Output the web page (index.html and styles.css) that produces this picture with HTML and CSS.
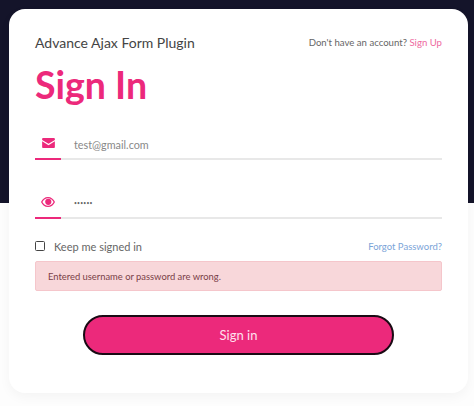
FILE: index.html
```html
<!DOCTYPE html>
<html lang="en">
<head>
  <meta charset="UTF-8" />
  <title>Sign In</title>
  <link rel="stylesheet" href="styles.css">
</head>
<body>
<div class="backdrop"></div>
<div class="page">
  <div class="card">
    <div class="top-row">
      <span class="brand">Advance Ajax Form Plugin</span>
      <span class="account">Don't have an account? <a href="#">Sign Up</a></span>
    </div>
    <h1>Sign In</h1>

    <div class="field">
      <span class="field-icon">
        <svg width="13" height="10" viewBox="0 0 14 11"><path d="M1.2 0h11.600C13.500 0 14 .5 14 1.200v.9L7 6.300 0 2.100v-.9C0 .5.5 0 1.200 0zM0 3.700l7 4.200 7-4.200v6.100c0 .7-.5 1.200-1.200 1.200H1.200C.5 11 0 10.500 0 9.800z" fill="#ec297b"/></svg>
      </span>
      <span class="field-value muted">test@gmail.com</span>
    </div>

    <div class="field second">
      <span class="field-icon">
        <svg width="14" height="10" viewBox="0 0 14 10"><path d="M7 0C3.900 0 1.300 2 0 5c1.300 3 3.900 5 7 5s5.700-2 7-5c-1.300-3-3.900-5-7-5zm0 8.800C4.700 8.800 2.600 7.300 1.400 5 2.600 2.700 4.700 1.200 7 1.200s4.400 1.500 5.600 3.800C11.400 7.300 9.300 8.800 7 8.800z" fill="#ec297b"/><circle cx="7.300" cy="4.800" r="3.100" fill="#ec297b"/></svg>
      </span>
      <span class="field-value dots">••••••</span>
    </div>

    <div class="options">
      <label class="remember"><span class="checkbox"></span>Keep me signed in</label>
      <a class="forgot" href="#">Forgot Password?</a>
    </div>

    <div class="alert">Entered username or password are wrong.</div>

    <button class="submit">Sign in</button>
  </div>
</div>
</body>
</html>
```

FILE: styles.css
```css
:root {
  --pink: #ec297b;
  --text-color: #444;
}

html, body {
  height: 100%;
}

body {
  margin: 0;
  background-color: #fdfdfd;
  font-family: 'Lato', 'Liberation Sans', sans-serif;
  color: var(--text-color);
  overflow: hidden;
}

.backdrop {
  height: 203px;
  background-color: #14142a;
  margin-bottom: -203px;
}

.page {
  padding: 9px 6px 0 9px;
}

.card {
  height: 384px;
  box-sizing: border-box;
  padding: 24px 26px 0;
  background-color: white;
  border-radius: 16px;
  box-shadow: 0 4px 12px rgba(0, 0, 0, 0.04);
}

.top-row {
  display: flex;
  justify-content: space-between;
  align-items: center;
  height: 18px;
}

.brand {
  font-size: 14px;
  color: #444;
}

.account {
  font-size: 9.6px;
  color: #666;
}

.account a {
  color: #ee6aa0;
  text-decoration: none;
}

h1 {
  margin: 12px 0 0;
  font-size: 37.5px;
  line-height: 44px;
  font-weight: 700;
  color: var(--pink);
}

.field {
  display: flex;
  align-items: center;
  height: 30px;
  margin-top: 21px;
  border-bottom: 2px solid #e8e8e8;
}

.field.second {
  margin-top: 27px;
}

.field-icon {
  width: 26px;
  height: 30px;
  margin-bottom: -2px;
  border-bottom: 2px solid var(--pink);
  display: flex;
  align-items: center;
  justify-content: center;
}

.field-value {
  margin-left: 13px;
  padding-top: 2px;
  font-size: 10.8px;
}

.muted {
  color: #888;
}

.dots {
  font-size: 5px;
  color: #666;
  letter-spacing: 0.2px;
}

.options {
  display: flex;
  justify-content: space-between;
  align-items: center;
  margin-top: 19px;
  height: 16px;
}

.remember {
  display: flex;
  align-items: center;
  font-size: 11px;
  color: #666;
}

.checkbox {
  width: 8px;
  height: 8px;
  margin-right: 9px;
  border: 1px solid #444;
  border-radius: 1.5px;
}

.forgot {
  font-size: 9.5px;
  color: #7ba4d8;
  text-decoration: none;
}

.alert {
  margin-top: 7px;
  height: 30px;
  box-sizing: border-box;
  padding-left: 12px;
  display: flex;
  align-items: center;
  background-color: #f8d7da;
  border: 1px solid #f5c6cb;
  border-radius: 2px;
  font-size: 9.4px;
  color: #7a3f48;
}

.submit {
  display: block;
  width: 311px;
  height: 40px;
  margin: 24px 0 0 48px;
  background-color: var(--pink);
  border: 2px solid #1a0a14;
  border-radius: 20px;
  font-family: inherit;
  font-size: 13px;
  color: #ffe0ee;
}
```
